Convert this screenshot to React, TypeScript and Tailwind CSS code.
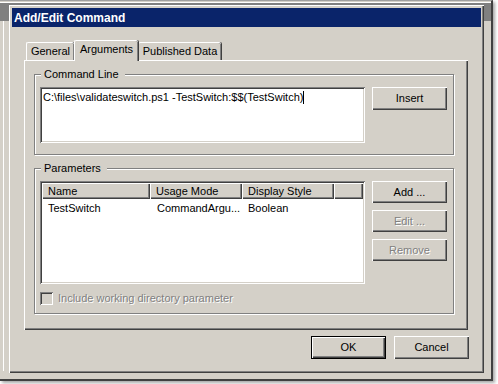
import React from "react";

const raised =
  "bg-[#d4d0c8] shadow-[inset_1px_1px_0_#fff,inset_-1px_-1px_0_#404040,inset_-2px_-2px_0_#808080]";
const sunken =
  "shadow-[inset_1px_1px_0_#808080,inset_-1px_-1px_0_#fff,inset_2px_2px_0_#404040,inset_-2px_-2px_0_#d4d0c8]";
const grayText = "text-[#808080] [text-shadow:1px_1px_0_#fff]";

const Button = ({
  label,
  h = 23,
  isDefault = false,
  disabled = false,
}: {
  label: string;
  h?: number;
  isDefault?: boolean;
  disabled?: boolean;
}) => (
  <div
    className={`w-[75px] flex items-center justify-center ${isDefault ? "border border-black" : ""} ${
      h === 22 ? "h-[22px]" : "h-[23px]"
    }`}
  >
    <div className={`w-full h-full flex items-center justify-center ${raised}`}>
      <span className={disabled ? grayText : "text-black"}>{label}</span>
    </div>
  </div>
);

const Tab = ({ label, w, selected = false }: { label: string; w: string; selected?: boolean }) => (
  <div
    className={`${w} flex justify-center rounded-t-[2px] bg-[#d4d0c8] border-l border-t border-white shadow-[inset_-1px_0_0_#808080,1px_0_0_#404040] ${
      selected ? "h-[21px] -mb-px relative z-10 pt-[2px]" : "h-[18px] pt-[2px]"
    }`}
  >
    <span className="leading-[13px]">{label}</span>
  </div>
);

const Group = ({ label, h, children }: { label: string; h: string; children: React.ReactNode }) => (
  <div
    className={`relative w-[420px] ${h} border border-[#808080] shadow-[inset_1px_1px_0_#fff,1px_1px_0_#fff] pl-[5px] pt-[12px]`}
  >
    <span className="absolute top-[-7px] left-[6px] pl-[3px] pr-[6px] bg-[#d4d0c8] leading-[13px]">{label}</span>
    {children}
  </div>
);

const columns = [
  { name: "Name", w: "w-[108px]" },
  { name: "Usage Mode", w: "w-[92px]" },
  { name: "Display Style", w: "w-[92px]" },
];

export default function App() {
  return (
    <div className="w-[498px] h-[384px] bg-white overflow-hidden font-['Liberation_Sans',Arial,sans-serif] text-[11px] leading-[13px] text-black">
      {/* parent window behind the dialog */}
      <div className="relative w-[493px] h-[381px] bg-[#d4d0c8] border-t border-[#a0a0a0] border-r-2 border-b-2 border-r-[#404040] border-b-[#404040] shadow-[2px_2px_3px_rgba(0,0,0,0.35)] pl-[9px] pt-[4px]">
        <div className="absolute left-0 right-0 top-[1px] h-px bg-white" />
        <div className="absolute left-0 right-0 top-[2px] h-[18px] bg-[#808080]" />
        <div className="absolute left-[3px] top-[20px] bottom-[8px] w-px bg-white" />

        {/* dialog */}
        <div className="relative w-[475px] h-[368px] bg-[#d4d0c8] p-[3px] flex flex-col shadow-[inset_1px_1px_0_#fff,inset_-1px_-1px_0_#404040,inset_-2px_-2px_0_#808080]">
          <div className="h-[19px] bg-[#0a246a] flex items-center pl-[2px]">
            <span className="text-white font-bold text-[12px] leading-[14px]">Add/Edit Command</span>
          </div>

          <div className="px-[12px] pt-[13px] flex flex-col">
            <div className="flex items-end h-[20px] pl-[2px]">
              <Tab label="General" w="w-[48px]" />
              <Tab label="Arguments" w="w-[64px]" selected />
              <Tab label="Published Data" w="w-[83px]" />
            </div>

            <div className="w-[444px] h-[270px] border-t border-l border-white shadow-[inset_-1px_-1px_0_#404040,inset_-2px_-2px_0_#808080] pl-[9px] pt-[13px]">
              <Group label="Command Line" h="h-[81px]">
                <div className="flex gap-[7px]">
                  <div className={`w-[325px] h-[56px] bg-white ${sunken} pl-[3px] pt-[4px]`}>
                    <span>C:\files\validateswitch.ps1 -TestSwitch:$$(TestSwitch)</span>
                    <span className="inline-block w-px h-[13px] bg-black align-top" />
                  </div>
                  <Button label="Insert" />
                </div>
              </Group>

              <div className="h-[13px]" />

              <Group label="Parameters" h="h-[146px]">
                <div className="flex gap-[7px]">
                  <div className="flex flex-col">
                    <div className={`w-[325px] h-[103px] bg-white ${sunken} p-[2px]`}>
                      <div className="flex h-[16px]">
                        {columns.map((c) => (
                          <div
                            key={c.name}
                            className={`${c.w} h-full ${raised} pl-[6px] flex items-center`}
                          >
                            {c.name}
                          </div>
                        ))}
                        <div className={`flex-1 h-full ${raised}`} />
                      </div>
                      <div className="flex h-[16px] items-center pt-[2px]">
                        <div className="w-[108px] pl-[6px]">TestSwitch</div>
                        <div className="w-[92px] pl-[7px]">CommandArgu...</div>
                        <div className="w-[92px] pl-[6px]">Boolean</div>
                      </div>
                    </div>
                    <div className="flex items-center gap-[5px] mt-[8px]">
                      <div className={`w-[13px] h-[13px] bg-[#d4d0c8] ${sunken}`} />
                      <span className={grayText}>Include working directory parameter</span>
                    </div>
                  </div>
                  <div className="flex flex-col gap-[7px]">
                    <Button label="Add ..." h={22} />
                    <Button label="Edit ..." h={22} disabled />
                    <Button label="Remove" h={22} disabled />
                  </div>
                </div>
              </Group>
            </div>

            <div className="flex justify-end gap-[8px] mt-[6px]">
              <Button label="OK" isDefault />
              <Button label="Cancel" />
            </div>
          </div>
        </div>
      </div>
    </div>
  );
}
